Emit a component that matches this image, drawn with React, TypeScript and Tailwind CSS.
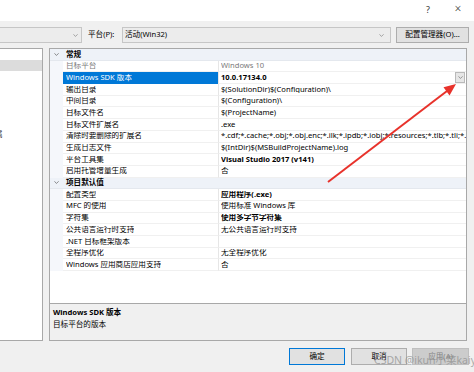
import React from "react";

type Row =
  | { cat: string }
  | { name: string; value: string; bold?: boolean; muted?: boolean; selected?: boolean; dropdown?: boolean };

const rows: Row[] = [
  { cat: "常规" },
  { name: "目标平台", value: "Windows 10", muted: true },
  { name: "Windows SDK 版本", value: "10.0.17134.0", bold: true, selected: true, dropdown: true },
  { name: "输出目录", value: "$(SolutionDir)$(Configuration)\\" },
  { name: "中间目录", value: "$(Configuration)\\" },
  { name: "目标文件名", value: "$(ProjectName)" },
  { name: "目标文件扩展名", value: ".exe" },
  { name: "清除时要删除的扩展名", value: "*.cdf;*.cache;*.obj;*.obj.enc;*.ilk;*.ipdb;*.iobj;*.resources;*.tlb;*.tli;*.tlh;*.tmp" },
  { name: "生成日志文件", value: "$(IntDir)$(MSBuildProjectName).log" },
  { name: "平台工具集", value: "Visual Studio 2017 (v141)", bold: true },
  { name: "启用托管增量生成", value: "否" },
  { cat: "项目默认值" },
  { name: "配置类型", value: "应用程序(.exe)", bold: true },
  { name: "MFC 的使用", value: "使用标准 Windows 库" },
  { name: "字符集", value: "使用多字节字符集", bold: true },
  { name: "公共语言运行时支持", value: "无公共语言运行时支持" },
  { name: ".NET 目标框架版本", value: "" },
  { name: "全程序优化", value: "无全程序优化" },
  { name: "Windows 应用商店应用支持", value: "否" },
];

function Chevron({ className }: { className?: string }) {
  return (
    <svg viewBox="0 0 8 5" className={className} fill="none" stroke="currentColor" strokeWidth="1">
      <path d="M0.5 0.5 L4 4 L7.5 0.5" />
    </svg>
  );
}

function GridRow({ row }: { row: Row }) {
  if ("cat" in row) {
    return (
      <div className="flex items-center h-[11.7px] shrink-0 bg-[#eef2f8] border-b border-[#e4e8ee]">
        <Chevron className="w-[5px] h-[3px] ml-[4px] text-[#404040]" />
        <span className="ml-[7px] font-bold">{row.cat}</span>
      </div>
    );
  }
  return (
    <div className="flex h-[11.7px] shrink-0">
      <div className="w-[13px] bg-[#f5f7fb]" />
      <div
        className={
          row.selected
            ? "w-[155px] flex items-center pl-[3px] bg-[#0078d7] text-white"
            : "w-[155px] flex items-center pl-[3px] border-b border-[#f0f0f0] " + (row.muted ? "text-[#7a7a7a]" : "")
        }
      >
        <span className="whitespace-nowrap overflow-hidden">{row.name}</span>
      </div>
      <div className="flex-1 min-w-0 flex items-center pl-[2px] border-l border-b border-[#e6e6e6] border-b-[#f0f0f0]">
        <span
          className={
            "whitespace-nowrap overflow-hidden flex-1 min-w-0 " +
            (row.bold ? "font-bold " : "") +
            (row.muted ? "text-[#7a7a7a]" : "")
          }
        >
          {row.value}
        </span>
        {row.dropdown && (
          <div className="w-[10px] h-[11px] mr-[1px] flex items-center justify-center bg-[#e6e6e6] border border-[#b9b9b9]">
            <Chevron className="w-[5px] h-[3px] text-[#606060]" />
          </div>
        )}
      </div>
    </div>
  );
}

export default function App() {
  return (
    <div className="relative w-[474px] h-[372px] overflow-hidden bg-[#f0f0f0] text-black text-[7.6px] leading-none font-['Noto_Sans','Noto_Sans_CJK_SC',sans-serif]">
      {/* title bar */}
      <div className="h-[21px] bg-white flex justify-end items-start pr-[1px]">
        <span className="w-[30px] text-center pt-[5px] text-[9px] text-[#333]">?</span>
        <span className="w-[30px] text-center pt-[3px] text-[12px] font-light text-[#333]">×</span>
      </div>

      {/* configuration bar */}
      <div className="mt-[6px] h-[16px] flex items-center">
        <div className="ml-[-50px] w-[132px] h-full flex items-center bg-[#ececec] border border-[#c6c6c6] pl-[2px]">
          <span className="flex-1 whitespace-nowrap">活动(Debug)</span>
          <Chevron className="w-[5px] h-[3px] mr-[3px] text-[#707070]" />
        </div>
        <span className="ml-[6px] w-[34px] whitespace-nowrap">平台(P):</span>
        <div className="w-[269px] h-full flex items-center bg-[#ececec] border border-[#c6c6c6] pl-[2px]">
          <span className="flex-1">活动(Win32)</span>
          <Chevron className="w-[5px] h-[3px] mr-[6px] text-[#707070]" />
        </div>
        <button className="ml-[5px] w-[73px] h-full bg-[#e1e1e1] border border-[#adadad] flex items-center justify-center">
          配置管理器(O)...
        </button>
      </div>

      {/* main area */}
      <div className="mt-[5px] h-[293px] flex">
        <div className="w-[43px] bg-white border-y border-r border-[#a8a8a8] pt-[11px] flex flex-col">
          <div className="h-[11px] bg-[#dcdcdc]" />
          <div className="mt-[58px] ml-[-5px] h-[11px] flex items-center text-[#333]">属</div>
        </div>

        <div className="ml-[6px] w-[418px] flex flex-col">
          <div className="h-[257px] bg-white border border-[#a8a8a8] flex flex-col overflow-hidden">
            {rows.map((r, i) => (
              <GridRow key={i} row={r} />
            ))}
          </div>
          <div className="h-[37px] border border-[#a8a8a8] border-t-0 bg-[#f0f0f0] pl-[3px] pt-[5px] flex flex-col">
            <span className="font-bold">Windows SDK 版本</span>
            <span className="mt-[4px]">目标平台的版本</span>
          </div>
        </div>
      </div>

      {/* dialog buttons */}
      <div className="mt-[7px] h-[17px] flex">
        <button className="ml-[289px] w-[56px] h-full bg-[#e1e1e1] border border-[#0078d7] flex items-center justify-center">
          确定
        </button>
        <button className="ml-[6px] w-[56px] h-full bg-[#e1e1e1] border border-[#adadad] flex items-center justify-center">
          取消
        </button>
        <button className="ml-[5px] w-[57px] h-full bg-[#cccccc] border border-[#bfbfbf] text-[#838383] flex items-center justify-center">
          应用(A)
        </button>
      </div>

      {/* watermark */}
      <span className="absolute left-[374px] top-[355px] text-[10.5px] text-[#8a8a8a]/70 whitespace-nowrap">
        CSDN @ikun小菜kaiya
      </span>

      {/* red annotation arrow */}
      <svg className="absolute inset-0 pointer-events-none" width="474" height="372" viewBox="0 0 474 372">
        <line x1="328" y1="182" x2="447" y2="91" stroke="#e8322b" strokeWidth="2" />
        <polygon points="456,84 449.5,95.5 443.5,87.3" fill="#e8322b" />
      </svg>
    </div>
  );
}
